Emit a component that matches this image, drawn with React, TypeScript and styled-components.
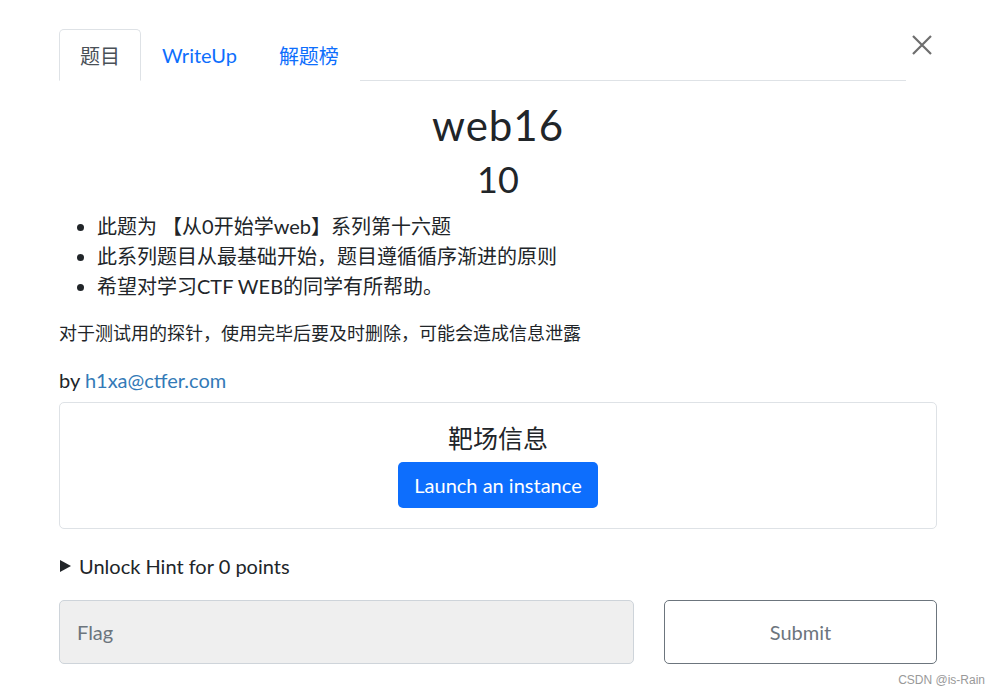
import React from 'react';
import styled, { createGlobalStyle } from 'styled-components';

const GlobalStyle = createGlobalStyle`
  html, body {
    margin: 0;
    padding: 0;
    background: #fff;
  }
  body {
    font-family: Lato, "Noto Sans CJK SC", sans-serif;
    color: #212529;
  }
`;

const Page = styled.div`
  width: 997px;
  height: 694px;
  box-sizing: border-box;
  padding: 29px 60px 0 59px;
  position: relative;
  overflow: hidden;
`;

const Header = styled.div`
  display: flex;
  align-items: flex-start;
`;

const Tabs = styled.ul`
  flex: 1;
  display: flex;
  list-style: none;
  margin: 0;
  padding: 0;
  border-bottom: 1px solid #dee2e6;
`;

const Tab = styled.li<{ $active?: boolean }>`
  box-sizing: border-box;
  height: 52px;
  margin-bottom: -1px;
  padding: 0 20px;
  display: flex;
  align-items: center;
  font-size: 20px;
  color: ${(p) => (p.$active ? '#495057' : '#0d6efd')};
  background: #fff;
  border: 1px solid ${(p) => (p.$active ? '#dee2e6' : 'transparent')};
  border-bottom-color: ${(p) => (p.$active ? '#fff' : 'transparent')};
  border-radius: 5px 5px 0 0;
`;

const Close = styled.button`
  width: 31px;
  height: 31px;
  padding: 0;
  border: none;
  background: none;
  display: flex;
  align-items: center;
  justify-content: center;
  color: #6e6e6e;
`;

const Title = styled.h2`
  margin: 19px 0 0;
  text-align: center;
  font-size: 42px;
  font-weight: 400;
  line-height: 1.2;
  letter-spacing: 1px;
`;

const Value = styled.h3`
  margin: 8px 0 0;
  text-align: center;
  font-size: 36px;
  font-weight: 400;
  line-height: 1.2;
`;

const Bullets = styled.ul`
  margin: 9px 0 0;
  padding-left: 38px;
  font-size: 20px;
  line-height: 30px;
`;

const Note = styled.p`
  margin: 19px 0 0;
  font-size: 18px;
  line-height: 26px;
`;

const Author = styled.p`
  margin: 19px 0 0;
  font-size: 20px;
  line-height: 30px;

  a {
    color: #337ab7;
    text-decoration: none;
  }
`;

const Card = styled.div`
  margin-top: 7px;
  border: 1px solid #dee2e6;
  border-radius: 5px;
  padding: 20px;
  display: flex;
  flex-direction: column;
  align-items: center;
  gap: 9px;
`;

const CardTitle = styled.div`
  font-size: 25px;
  line-height: 30px;
`;

const PrimaryButton = styled.button`
  height: 46px;
  padding: 0 16px;
  border: none;
  border-radius: 5px;
  background: #0d6efd;
  color: #fff;
  font-family: inherit;
  font-size: 20px;
`;

const Hint = styled.div`
  margin-top: 22px;
  display: flex;
  align-items: center;
  gap: 8px;
  font-size: 20px;
  line-height: 30px;

  &::before {
    content: '';
    width: 0;
    height: 0;
    border-left: 11px solid #212529;
    border-top: 6.5px solid transparent;
    border-bottom: 6.5px solid transparent;
    margin-left: 1px;
  }
`;

const SubmitRow = styled.div`
  margin-top: 19px;
  display: grid;
  grid-template-columns: 575px 273px;
  gap: 30px;
`;

const FlagInput = styled.input`
  box-sizing: border-box;
  height: 64px;
  padding: 0 17px;
  border: 1px solid #ced4da;
  border-radius: 5px;
  background: #efefef;
  font-family: inherit;
  font-size: 20px;
  color: #212529;

  &::placeholder {
    color: #6c757d;
  }
`;

const OutlineButton = styled.button`
  box-sizing: border-box;
  height: 64px;
  border: 1px solid #6c757d;
  border-radius: 5px;
  background: #fff;
  color: #6c757d;
  font-family: inherit;
  font-size: 20px;
`;

const Watermark = styled.div`
  position: absolute;
  right: 12px;
  bottom: 7px;
  font-family: "Liberation Sans", sans-serif;
  font-size: 12px;
  color: #999;
`;

const App: React.FC = () => {
  return (
    <>
      <GlobalStyle />
      <Page>
        <Header>
          <Tabs>
            <Tab $active>题目</Tab>
            <Tab>WriteUp</Tab>
            <Tab>解题榜</Tab>
          </Tabs>
          <Close aria-label="close">
            <svg width="22" height="22" viewBox="0 0 22 22">
              <path d="M2 2 L20 20 M20 2 L2 20" stroke="currentColor" strokeWidth="2.2" />
            </svg>
          </Close>
        </Header>

        <Title>web16</Title>
        <Value>10</Value>

        <Bullets>
          <li>此题为 【从0开始学web】系列第十六题</li>
          <li>此系列题目从最基础开始，题目遵循循序渐进的原则</li>
          <li>希望对学习CTF WEB的同学有所帮助。</li>
        </Bullets>

        <Note>对于测试用的探针，使用完毕后要及时删除，可能会造成信息泄露</Note>

        <Author>
          by <a href="#">h1xa@ctfer.com</a>
        </Author>

        <Card>
          <CardTitle>靶场信息</CardTitle>
          <PrimaryButton>Launch an instance</PrimaryButton>
        </Card>

        <Hint>Unlock Hint for 0 points</Hint>

        <SubmitRow>
          <FlagInput placeholder="Flag" />
          <OutlineButton>Submit</OutlineButton>
        </SubmitRow>

        <Watermark>CSDN @is-Rain</Watermark>
      </Page>
    </>
  );
};

export default App;
